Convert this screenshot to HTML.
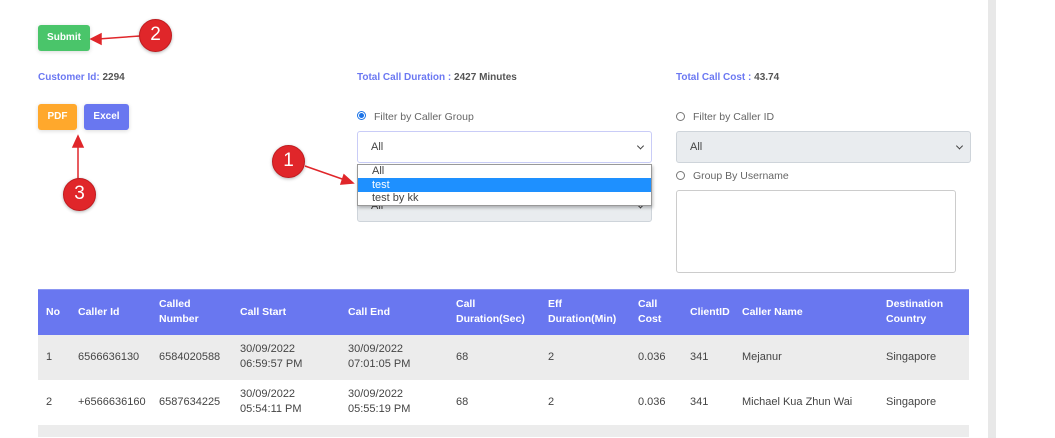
<!DOCTYPE html>
<html><head><meta charset="utf-8"><style>
*{margin:0;padding:0;box-sizing:border-box}
body{width:1055px;height:438px;overflow:hidden;background:#fff;font-family:"Liberation Sans",sans-serif;position:relative;color:#555}
.a{position:absolute}
.btn{position:absolute;color:#fff;font-weight:bold;font-size:10px;border-radius:3px;text-align:center;box-shadow:0 1px 4px rgba(0,0,0,.15)}
.lbl{font-size:10px;font-weight:bold;color:#6b78f2}
.lbl b{color:#555}
.sel{position:absolute;border:1px solid #ced4da;border-radius:3px;font-size:11px;color:#444;padding-left:13px}
.chev{position:absolute;right:8px;top:50%;width:5px;height:5px;border-right:1.5px solid #444;border-bottom:1.5px solid #444;transform:translateY(-70%) rotate(45deg)}
.radio{position:absolute;width:9px;height:9px;border:1px solid #777;border-radius:50%}
.rt{position:absolute;font-size:10.5px;color:#666}
.badge{position:absolute;width:33px;height:33px;border-radius:50%;background:#e0262a;border:1.5px solid #c01b1f;color:#fff;font-size:19px;text-align:center;line-height:30px;box-shadow:0 1px 3px rgba(0,0,0,.3)}
table{position:absolute;left:38px;top:289px;width:931px;border-collapse:collapse;font-size:11px;table-layout:fixed}
th{background:#6977f0;color:#fff;font-weight:bold;text-align:left;height:45px;font-size:10.5px;line-height:15px;border-top:1px solid #8b96f2;padding:0}
td{height:45px;padding:0;color:#444;line-height:15px}
tr.g td{background:#ececec}
</style></head><body>
<div class="a" style="left:988px;top:0;width:8px;height:438px;background:#e8e8e8"></div>

<div class="btn" style="left:38px;top:25px;width:52px;height:26px;line-height:26px;background:#4ac56a">Submit</div>
<div class="a lbl" style="left:38px;top:72px">Customer Id: <b>2294</b></div>
<div class="a lbl" style="left:357px;top:72px">Total Call Duration : <b>2427 Minutes</b></div>
<div class="a lbl" style="left:676px;top:72px">Total Call Cost : <b>43.74</b></div>
<div class="btn" style="left:38px;top:104px;width:39px;height:26px;line-height:26px;background:#ffa82c">PDF</div>
<div class="btn" style="left:84px;top:104px;width:45px;height:26px;line-height:26px;background:#6977f0">Excel</div>

<div class="radio" style="left:357px;top:111px;border-color:#1a73e8;background:radial-gradient(circle,#1a73e8 45%,#fff 55%)"></div>
<div class="rt" style="left:374px;top:111px">Filter by Caller Group</div>
<div class="sel" style="left:357px;top:131px;width:295px;height:32px;line-height:31px;border-color:#c9ccf7">All<span class="chev"></span></div>
<div class="sel" style="left:357px;top:190px;width:295px;height:32px;line-height:31px;background:#e9ecef">All<span class="chev"></span></div>
<div class="a" style="left:357px;top:164px;width:295px;height:42px;background:#fff;border:1px solid #999;box-shadow:1px 2px 3px rgba(0,0,0,.25);font-size:11px;color:#444">
<div style="height:13px;line-height:13px;padding-left:14px">All</div>
<div style="height:14px;line-height:14px;padding-left:14px;background:#1e90ff;color:#fff">test</div>
<div style="height:13px;line-height:13px;padding-left:14px">test by kk</div>
</div>

<div class="radio" style="left:676px;top:112px"></div>
<div class="rt" style="left:693px;top:111px">Filter by Caller ID</div>
<div class="sel" style="left:676px;top:131px;width:295px;height:32px;line-height:31px;background:#e9ecef">All<span class="chev"></span></div>
<div class="radio" style="left:676px;top:171px"></div>
<div class="rt" style="left:693px;top:170px">Group By Username</div>
<div class="a" style="left:676px;top:190px;width:280px;height:83px;border:1px solid #ccc;border-radius:3px"></div>

<table>
<colgroup><col style="width:40px"><col style="width:81px"><col style="width:81px"><col style="width:108px"><col style="width:108px"><col style="width:92px"><col style="width:90px"><col style="width:52px"><col style="width:52px"><col style="width:144px"><col style="width:83px"></colgroup>
<tr><th style="padding-left:8px">No</th><th>Caller Id</th><th>Called<br>Number</th><th>Call Start</th><th>Call End</th><th>Call<br>Duration(Sec)</th><th>Eff<br>Duration(Min)</th><th>Call<br>Cost</th><th>ClientID</th><th>Caller Name</th><th>Destination<br>Country</th></tr>
<tr class="g"><td style="padding-left:8px">1</td><td>6566636130</td><td>6584020588</td><td>30/09/2022<br>06:59:57 PM</td><td>30/09/2022<br>07:01:05 PM</td><td>68</td><td>2</td><td>0.036</td><td>341</td><td>Mejanur</td><td>Singapore</td></tr>
<tr><td style="padding-left:8px">2</td><td>+6566636160</td><td>6587634225</td><td>30/09/2022<br>05:54:11 PM</td><td>30/09/2022<br>05:55:19 PM</td><td>68</td><td>2</td><td>0.036</td><td>341</td><td>Michael Kua Zhun Wai</td><td>Singapore</td></tr>
<tr class="g"><td colspan="11" style="height:12px"></td></tr>
</table>

<svg class="a" style="left:0;top:0" width="1055" height="438">
<g stroke="#e0262a" stroke-width="1.5" fill="#e0262a">
<line x1="140" y1="36" x2="98" y2="39"/><polygon points="91,39 101,34 101,44"/>
<line x1="78" y1="180" x2="78" y2="145"/><polygon points="78,136 73,147 83,147"/>
<line x1="305" y1="166" x2="345" y2="180"/><polygon points="353,183 341,184 344,175"/>
</g></svg>
<div class="badge" style="left:139px;top:19px">2</div>
<div class="badge" style="left:63px;top:178px">3</div>
<div class="badge" style="left:272px;top:145px">1</div>
</body></html>
